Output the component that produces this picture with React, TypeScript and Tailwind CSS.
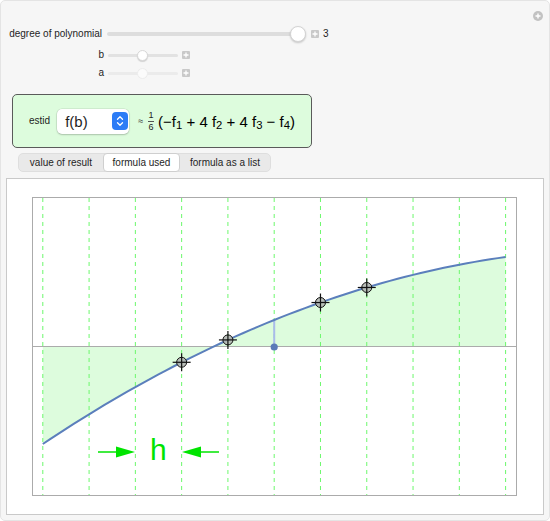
import React from "react";

const X = (t: number) => 42.8 + 46.28 * t;
const Y = (t: number) => 444 - 30.9 * t + 1.22 * t * t;

function PlusBox() {
  return (
    <div className="w-[8px] h-[8px] bg-[#c9c9c9] rounded-[1px] flex items-center justify-center">
      <svg width="6" height="6" viewBox="0 0 6 6">
        <path d="M3 0.5V5.5M0.5 3H5.5" stroke="#fff" strokeWidth="1.3" />
      </svg>
    </div>
  );
}

function Plot() {
  const pts: string[] = [];
  for (let i = 0; i <= 60; i++) {
    const t = (10 * i) / 60;
    pts.push(`${X(t).toFixed(2)},${Y(t).toFixed(2)}`);
  }
  const curve = "M" + pts.join(" L");
  const fill = `M${X(0)},346.5 L${pts.join(" L")} L${X(10)},346.5 Z`;
  const grid = Array.from({ length: 11 }, (_, k) => X(k));
  const markers = [3, 4, 6, 7];
  return (
    <svg width="536" height="335" viewBox="7 179 536 335" className="block">
      <path d={fill} fill="#ddfcdd" />
      {grid.map((x, i) => (
        <line key={i} x1={x} y1={198} x2={x} y2={495} stroke="#6cf86c" strokeWidth="1" strokeDasharray="4 4" />
      ))}
      <rect x="32.5" y="197.5" width="484" height="298" fill="none" stroke="#ababab" strokeWidth="1" />
      <line x1="32" y1="346.5" x2="516" y2="346.5" stroke="#ababab" strokeWidth="1" />
      <line x1={X(5)} y1={Y(5)} x2={X(5)} y2={346} stroke="#a9bbea" strokeWidth="2" />
      <path d={curve} fill="none" stroke="#5b7fbc" strokeWidth="2" />
      <circle cx={X(5)} cy={347} r="3.6" fill="#5b7bb8" />
      {markers.map((t) => {
        const cx = X(t);
        const cy = Y(t);
        return (
          <g key={t}>
            <circle cx={cx} cy={cy} r="5" fill="#b3b8b3" fillOpacity="0.9" stroke="#111" strokeWidth="1" />
            <line x1={cx - 9} y1={cy} x2={cx + 9} y2={cy} stroke="#111" strokeWidth="1.2" />
            <line x1={cx} y1={cy - 9} x2={cx} y2={cy + 9} stroke="#111" strokeWidth="1.2" />
          </g>
        );
      })}
      <line x1="98" y1="452" x2="119" y2="452" stroke="#00e400" strokeWidth="1.5" />
      <polygon points="116,446.5 135,452 116,457.5" fill="#00e400" />
      <line x1="200" y1="452" x2="219" y2="452" stroke="#00e400" strokeWidth="1.5" />
      <polygon points="201,446.5 182,452 201,457.5" fill="#00e400" />
      <text x="150" y="460" fontSize="30" fill="#00e400" fontFamily="'Liberation Sans', Arial, sans-serif">
        h
      </text>
    </svg>
  );
}

export default function App() {
  return (
    <div className="w-[550px] h-[521px] relative bg-[#f6f6f6] border border-[#e4e4e4] rounded-[5px] overflow-hidden font-['Liberation_Sans',Arial,sans-serif] text-[#1e1e1e]">
      <div className="absolute left-[532px] top-[10px] w-[10px] h-[10px] rounded-full bg-[#c2c2c2] flex items-center justify-center">
        <svg width="6" height="6" viewBox="0 0 6 6">
          <path d="M3 0.5V5.5M0.5 3H5.5" stroke="#fff" strokeWidth="1.4" />
        </svg>
      </div>

      <div className="pt-[25px]">
        <div className="flex items-center h-[16px]">
          <div className="w-[101px] text-right text-[10px] leading-none">degree of polynomial</div>
          <div className="ml-[5px] w-[199px] h-[4px] rounded-full bg-[#dddddd] relative">
            <div className="absolute left-[183px] top-[-6px] w-[16px] h-[16px] rounded-full bg-white border border-[#d4d4d4] shadow-[0_1px_2px_rgba(0,0,0,0.2)]" />
          </div>
          <div className="ml-[5px]">
            <PlusBox />
          </div>
          <div className="ml-[4px] text-[10px] leading-none">3</div>
        </div>
        <div className="flex items-center h-[12px] mt-[7px]">
          <div className="w-[103px] text-right text-[10px] leading-none">b</div>
          <div className="ml-[4px] w-[70px] h-[3px] rounded-full bg-[#e2e2e2] relative">
            <div className="absolute left-[29px] top-[-4px] w-[11px] h-[11px] rounded-full bg-white border border-[#d8d8d8] shadow-[0_1px_1px_rgba(0,0,0,0.15)]" />
          </div>
          <div className="ml-[4px]">
            <PlusBox />
          </div>
        </div>
        <div className="flex items-center h-[12px] mt-[6px]">
          <div className="w-[103px] text-right text-[10px] leading-none">a</div>
          <div className="ml-[4px] w-[70px] h-[3px] rounded-full bg-[#ebebeb] relative">
            <div className="absolute left-[29px] top-[-4px] w-[11px] h-[11px] rounded-full bg-[#fbfbfb] border border-[#ececec]" />
          </div>
          <div className="ml-[4px]">
            <PlusBox />
          </div>
        </div>
      </div>

      <div className="ml-[11px] mt-[15px] w-[300px] h-[54px] border border-[#5a5a5a] rounded-[5px] bg-[#ddfcdd] flex items-center pl-[16px]">
        <span className="text-[10px] leading-none">estid</span>
        <div className="ml-[7px] w-[72px] h-[25px] bg-white rounded-[5px] shadow-[0_0_0_0.5px_rgba(0,0,0,0.12),0_1px_2px_rgba(0,0,0,0.18)] flex items-center justify-between pl-[8px] pr-[1px]">
          <span className="text-[15px] leading-none">f(b)</span>
          <div className="w-[16px] h-[18px] rounded-[4px] bg-[#2c7cf6] flex items-center justify-center">
            <svg width="8" height="12" viewBox="0 0 8 12">
              <path d="M1.5 4.2L4 1.7L6.5 4.2M1.5 7.8L4 10.3L6.5 7.8" fill="none" stroke="#fff" strokeWidth="1.3" strokeLinecap="round" strokeLinejoin="round" />
            </svg>
          </div>
        </div>
        <span className="ml-[9px] text-[9px] leading-none">≈</span>
        <div className="ml-[5px] flex flex-col items-center leading-none text-[9px]">
          <span className="border-b border-[#555] px-[0.5px] pb-[1px]">1</span>
          <span className="pt-[1px]">6</span>
        </div>
        <span className="ml-[4px] text-[15px] leading-none whitespace-pre text-black">
          (−f<sub>1</sub> + 4 f<sub>2</sub> + 4 f<sub>3</sub> − f<sub>4</sub>)
        </span>
      </div>

      <div className="ml-[17px] mt-[5px] w-[253px] h-[19px] bg-[#e9e9e9] border border-[#dedede] rounded-[5px] flex text-[10px] leading-none">
        <div className="w-[84px] flex items-center justify-center">value of result</div>
        <div className="w-[77px] flex items-center justify-center bg-white border border-[#cfcfcf] rounded-[4px] -my-[1px]">formula used</div>
        <div className="flex-1 flex items-center justify-center">formula as a list</div>
      </div>

      <div className="ml-[5px] mt-[6px] w-[538px] h-[337px] border border-[#c9c9c9] bg-white">
        <Plot />
      </div>
    </div>
  );
}
